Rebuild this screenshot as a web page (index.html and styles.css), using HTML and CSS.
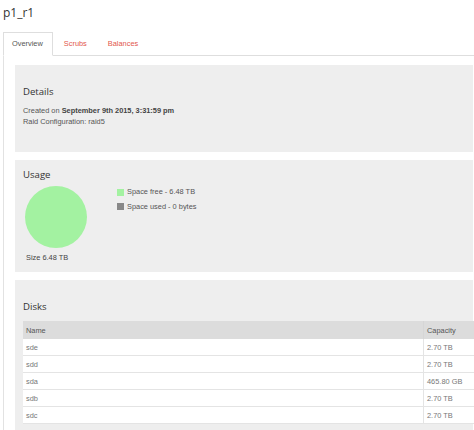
FILE: index.html
```html
<!DOCTYPE html>
<html>
<head>
<meta charset="utf-8">
<link rel="stylesheet" href="styles.css">
</head>
<body>
<h1 class="title">p1_r1</h1>
<div class="tabs">
  <div class="tab active">Overview</div>
  <div class="tab">Scrubs</div>
  <div class="tab">Balances</div>
</div>
<div class="content">
  <section class="panel details">
    <h2 class="panel-title">Details</h2>
    <div class="line">Created on <b>September 9th 2015, 3:31:59 pm</b></div>
    <div class="line">Raid Configuration: raid5</div>
  </section>
  <section class="panel usage">
    <h2 class="panel-title">Usage</h2>
    <div class="usage-row">
      <div class="pie-col">
        <div class="pie"></div>
        <div class="size">Size 6.48 TB</div>
      </div>
      <div class="legend">
        <div class="legend-item"><span class="swatch free"></span>Space free - 6.48 TB</div>
        <div class="legend-item"><span class="swatch used"></span>Space used - 0 bytes</div>
      </div>
    </div>
  </section>
  <section class="panel disks">
    <h2 class="panel-title">Disks</h2>
    <table class="disk-table">
      <thead>
        <tr><th>Name</th><th class="cap">Capacity</th></tr>
      </thead>
      <tbody>
        <tr><td>sde</td><td class="cap">2.70 TB</td></tr>
        <tr><td>sdd</td><td class="cap">2.70 TB</td></tr>
        <tr><td>sda</td><td class="cap">465.80 GB</td></tr>
        <tr><td>sdb</td><td class="cap">2.70 TB</td></tr>
        <tr><td>sdc</td><td class="cap">2.70 TB</td></tr>
      </tbody>
    </table>
  </section>
</div>
</body>
</html>
```
FILE: styles.css
```css
html, body {
  margin: 0;
  padding: 0;
  background: #fff;
}
body {
  font-family: "Liberation Sans", Arial, sans-serif;
  font-size: 7.4px;
  color: #555;
  overflow: hidden;
}
.title {
  margin: 0;
  padding: 3px 0 0 3px;
  height: 29px;
  font-family: "Open Sans", sans-serif;
  font-weight: 400;
  font-size: 12px;
  line-height: 20px;
  color: #333;
  box-sizing: border-box;
}
.tabs {
  display: flex;
  margin-left: 3px;
  margin-top: 3px;
  border-bottom: 1px solid #dedede;
}
.tab {
  border: 1px solid transparent;
  margin-bottom: -1px;
  margin-left: 2px;
  padding: 0 9px 0 8px;
  line-height: 22px;
  color: #e2574c;
}
.tab.active {
  color: #555;
  background: #fff;
  border-color: #dedede;
  border-bottom-color: #fff;
  margin-left: 0;
}
.content {
  margin-left: 3px;
  border-left: 1px solid #e2e2e2;
  padding: 9px 1px 0 11px;
}
.panel {
  background: #eeeeee;
  margin-bottom: 8px;
  padding: 20px 0 25px 8px;
}
.panel-title {
  margin: 0;
  font-family: "Open Sans", sans-serif;
  font-weight: 400;
  font-size: 9.6px;
  line-height: 13px;
  color: #333;
}
.details .panel-title {
  margin-bottom: 7px;
}
.line {
  line-height: 11px;
}
.line b {
  color: #444;
}
.usage {
  padding: 8px 0 9px 8px;
}
.usage-row {
  display: flex;
  align-items: flex-start;
  margin-top: 5px;
}
.pie-col {
  display: flex;
  flex-direction: column;
  margin-left: 2px;
}
.pie {
  width: 62px;
  height: 62px;
  border-radius: 50%;
  background: #a3f2a1;
}
.size {
  margin-top: 4px;
  margin-left: 1px;
  line-height: 11px;
  color: #444;
}
.legend {
  margin-left: 30px;
}
.legend-item {
  display: flex;
  align-items: center;
  line-height: 12px;
  margin-bottom: 2.5px;
  color: #555;
}
.swatch {
  width: 7px;
  height: 7px;
  margin-right: 3px;
}
.swatch.free {
  background: #a3f2a1;
}
.swatch.used {
  background: #888;
}
.disks {
  padding: 20px 0 10px 8px;
}
.disk-table {
  margin-top: 8px;
  width: calc(100% + 1px);
  border-collapse: collapse;
  font-size: 7.4px;
}
.disk-table th {
  background: #dcdcdc;
  color: #555;
  font-weight: 400;
  text-align: left;
  height: 18px;
  padding: 0 3px;
}
.disk-table td {
  background: #fff;
  color: #777;
  height: 16px;
  padding: 0 3px;
  border-bottom: 1px solid #e4e4e4;
}
.disk-table .cap {
  width: 44px;
  border-left: 1px solid #e4e4e4;
}
.disk-table th.cap {
  border-left: 1px solid #d6d6d6;
}
```
